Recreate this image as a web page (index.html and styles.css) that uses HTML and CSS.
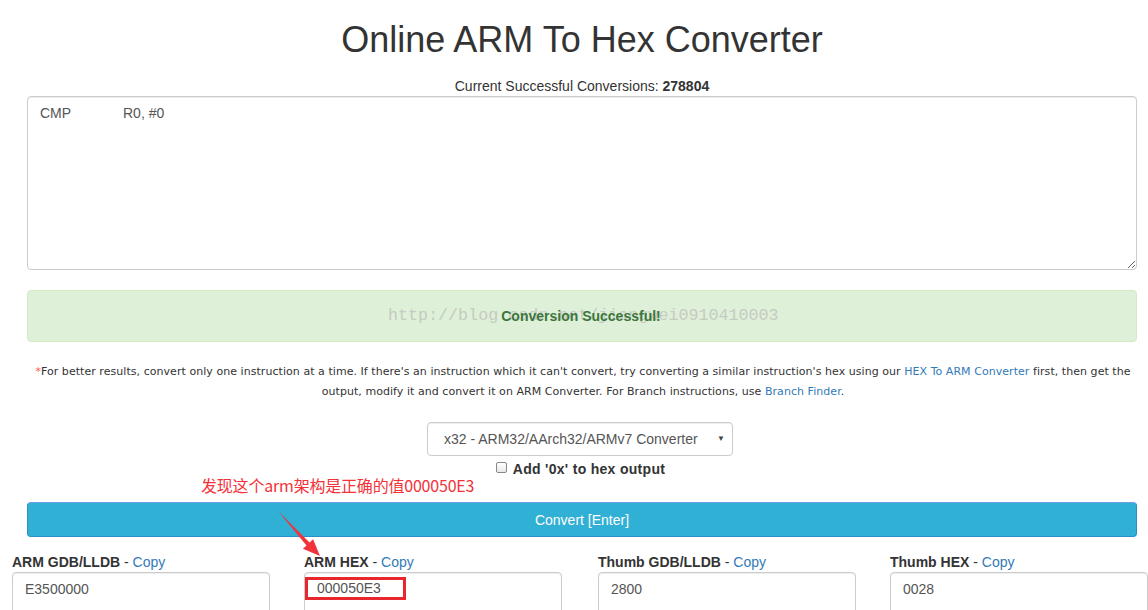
FILE: index.html
```html
<!DOCTYPE html>
<html>
<head>
<meta charset="utf-8">
<link rel="stylesheet" href="styles.css">
</head>
<body>
<div class="page">
  <h1 class="title">Online ARM To Hex Converter</h1>
  <p class="counter">Current Successful Conversions: <b>278804</b></p>
  <textarea class="asm" spellcheck="false">CMP&#9;R0, #0</textarea>
  <div class="alert">
    <span class="watermark">http://blog.csdn.net/jiangwei0910410003</span>
    <span class="alert-text">Conversion Successful!</span>
  </div>
  <p class="note"><span class="star">*</span>For better results, convert only one instruction at a time. If there's an instruction which it can't convert, try converting a similar instruction's hex using our <a href="#">HEX To ARM Converter</a> first, then get the<br>output, modify it and convert it on ARM Converter. For Branch instructions, use <a href="#">Branch Finder</a>.</p>
  <div class="select-row">
    <div class="select">
      <span>x32 - ARM32/AArch32/ARMv7 Converter</span>
      <span class="caret">&#9660;</span>
    </div>
  </div>
  <div class="check-row">
    <span class="checkbox"></span>
    <span class="check-label">Add '0x' to hex output</span>
  </div>
  <div class="annotation">发现这个arm架构是正确的值000050E3</div>
  <svg class="arrow" width="60" height="60" viewBox="0 0 60 60">
    <path d="M8 6 L39.5 37.6 L43.1 34.2 L50 51 L32.9 43.8 L36.5 40.4 Z" fill="#f2333a"/>
  </svg>
  <button class="convert">Convert [Enter]</button>
</div>
<div class="outputs">
  <div class="out">
    <div class="label"><b>ARM GDB/LLDB</b> - <a href="#">Copy</a></div>
    <div class="box">E3500000</div>
  </div>
  <div class="out">
    <div class="label"><b>ARM HEX</b> - <a href="#">Copy</a></div>
    <div class="box hl-box"><span class="hl">000050E3</span></div>
  </div>
  <div class="out">
    <div class="label"><b>Thumb GDB/LLDB</b> - <a href="#">Copy</a></div>
    <div class="box">2800</div>
  </div>
  <div class="out">
    <div class="label"><b>Thumb HEX</b> - <a href="#">Copy</a></div>
    <div class="box">0028</div>
  </div>
</div>
</body>
</html>
```
FILE: styles.css
```css
* { box-sizing: border-box; }
html, body { margin: 0; padding: 0; background: #fff; overflow: hidden; }
body {
  font-family: "Liberation Sans", Arial, sans-serif;
  font-size: 14px;
  line-height: 20px;
  color: #333;
}
a { color: #337ab7; text-decoration: none; }
.page {
  position: relative;
  width: 1110px;
  margin-left: 27px;
}
.title {
  margin: 20px 0 0;
  font-size: 36px;
  font-weight: 400;
  line-height: 40px;
  text-align: center;
  color: #333;
}
.counter {
  margin: 16px 0 0;
  text-align: center;
}
.asm {
  display: block;
  width: 100%;
  height: 174px;
  margin: 0;
  padding: 6px 12px;
  border: 1px solid #ccc;
  border-radius: 4px;
  font-family: "Liberation Sans", Arial, sans-serif;
  font-size: 14px;
  line-height: 20px;
  color: #555;
  tab-size: 83px;
  resize: vertical;
  outline: none;
  box-shadow: inset 0 1px 1px rgba(0,0,0,.075);
}
.alert {
  position: relative;
  height: 52px;
  margin-top: 20px;
  background: #dff0d8;
  border: 1px solid #d6e9c6;
  border-radius: 4px;
  display: flex;
  align-items: center;
  justify-content: center;
}
.watermark {
  position: absolute;
  left: 360px;
  top: 14px;
  font-family: "Liberation Mono", monospace;
  font-size: 16.7px;
  line-height: 22px;
  color: #c5cbc2;
}
.alert-text {
  position: relative;
  font-weight: 700;
  color: #3c763d;
  margin-left: -2px;
}
.note {
  margin: 20px 0 0 -4px;
  width: 1120px;
  text-align: center;
  font-family: "DejaVu Sans", sans-serif;
  font-size: 11px;
  letter-spacing: 0.05px;
  line-height: 20px;
  color: #333;
}
.star { color: #f55; }
.select-row {
  display: flex;
  justify-content: center;
  margin-top: 20px;
}
.select {
  width: 306px;
  height: 34px;
  margin-left: -4px;
  border: 1px solid #ccc;
  border-radius: 4px;
  display: flex;
  align-items: center;
  justify-content: space-between;
  padding: 0 7px 0 16px;
  color: #555;
  font-size: 14px;
  box-shadow: inset 0 1px 1px rgba(0,0,0,.075);
}
.caret { font-size: 8px; color: #444; }
.check-row {
  display: flex;
  justify-content: center;
  align-items: center;
  gap: 6px;
  height: 20px;
  margin-top: 3px;
  margin-left: -3px;
}
.checkbox {
  width: 11px;
  height: 11px;
  border: 1px solid #888;
  border-radius: 2px;
  background: linear-gradient(#fff, #e8e8e8);
  margin-top: -4px;
}
.check-label { font-weight: 700; letter-spacing: 0.3px; }
.annotation {
  position: absolute;
  left: 174px;
  top: 455px;
  font-family: "Noto Sans CJK SC", sans-serif;
  font-size: 16px;
  line-height: 20px;
  color: #f2333a;
  letter-spacing: -0.2px;
}
.arrow {
  position: absolute;
  left: 243px;
  top: 485px;
}
.convert {
  display: block;
  width: 100%;
  height: 35px;
  margin-top: 23px;
  background: #31b0d5;
  border: 1px solid #2a8fc8;
  border-top-color: #6f9fe0;
  border-radius: 4px;
  color: #fff;
  font-family: "Liberation Sans", Arial, sans-serif;
  font-size: 14px;
}
.outputs {
  display: grid;
  grid-template-columns: 292px 294px 292px 258px;
  padding-left: 12px;
  margin-top: 15px;
}
.out .label { height: 20px; }
.out .label b { color: #333; }
.box {
  width: 258px;
  height: 60px;
  border: 1px solid #ccc;
  border-radius: 4px;
  padding: 6px 12px;
  color: #555;
  box-shadow: inset 0 1px 1px rgba(0,0,0,.075);
}
.hl-box { padding: 4px 0 0 0; }
.hl {
  display: inline-block;
  width: 101px;
  height: 23px;
  border: 3px solid #e8262d;
  padding-left: 9px;
  line-height: 17px;
}
```
